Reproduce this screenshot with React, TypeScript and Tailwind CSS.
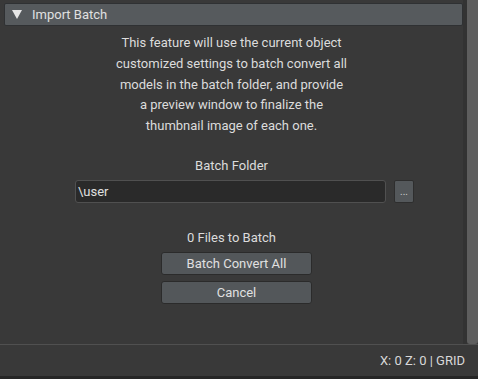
import React from "react";

export default function App() {
  const font = { fontFamily: "Roboto, 'Noto Sans', sans-serif" };
  return (
    <div className="w-[478px] h-[379px] bg-[#393939] flex flex-col overflow-hidden text-[#d2d2d2]" style={font}>
      <div className="flex flex-1 min-h-0">
        <div className="flex-1 flex flex-col pt-[3px] pl-[4px] pr-[0px]">
          <div className="h-[23px] bg-[#565a5d] border border-[#2f3133] rounded-[2px] flex items-center">
            <svg width="10" height="9" viewBox="0 0 10 9" className="ml-[7px]">
              <polygon points="0,0 10,0 5,9" fill="#e6e6e6" />
            </svg>
            <span className="ml-[10px] text-[13px] text-[#e0e0e0]">Import Batch</span>
          </div>
          <div className="flex flex-col items-center text-[13px] leading-[20.8px] mt-[7px] text-center text-[#dcdcdc] pr-[4px]">
            <div>This feature will use the current object</div>
            <div>customized settings to batch convert all</div>
            <div>models in the batch folder, and provide</div>
            <div>a preview window to finalize the</div>
            <div>thumbnail image of each one.</div>
          </div>
          <div className="text-center text-[13px] mt-[21px] leading-[16px] text-[#dcdcdc] pr-[4px]">Batch Folder</div>
          <div className="flex items-center mt-[6px] ml-[71px]">
            <div className="w-[311px] h-[23px] bg-[#2a2a2a] border border-[#505050] rounded-[3px] flex items-center pl-[2px] text-[13px] text-[#e0e0e0]">
              \user
            </div>
            <div className="ml-[8px] w-[20px] h-[23px] bg-[#54585b] border border-[#2e2e2e] rounded-[2px] flex items-end justify-center pb-[5px]">
              <span className="text-[10px] leading-[10px] text-[#cfcfcf]">...</span>
            </div>
          </div>
          <div className="text-center text-[13px] mt-[27px] leading-[16px] text-[#dcdcdc] pr-[4px]">0 Files to Batch</div>
          <div className="flex flex-col gap-[6px] mt-[6px] ml-[157px]">
            <div className="w-[151px] h-[23px] bg-[#53575a] border border-[#2b2b2b] rounded-[3px] flex items-center justify-center text-[13px] text-[#e0e0e0]">
              Batch Convert All
            </div>
            <div className="w-[151px] h-[23px] bg-[#53575a] border border-[#2b2b2b] rounded-[3px] flex items-center justify-center text-[13px] text-[#e0e0e0]">
              Cancel
            </div>
          </div>
        </div>
        <div className="w-[4px] bg-[#333333]" />
        <div className="w-[11px] bg-[#5e5e5e] rounded-b-[3px]" />
      </div>
      <div className="h-[1px] bg-[#505050]" />
      <div className="h-[31px] flex items-center justify-end pr-[13px] text-[13px] text-[#d8d8d8]">
        X: 0 Z: 0 | GRID
      </div>
      <div className="h-[3px] bg-[#262626]" />
    </div>
  );
}
